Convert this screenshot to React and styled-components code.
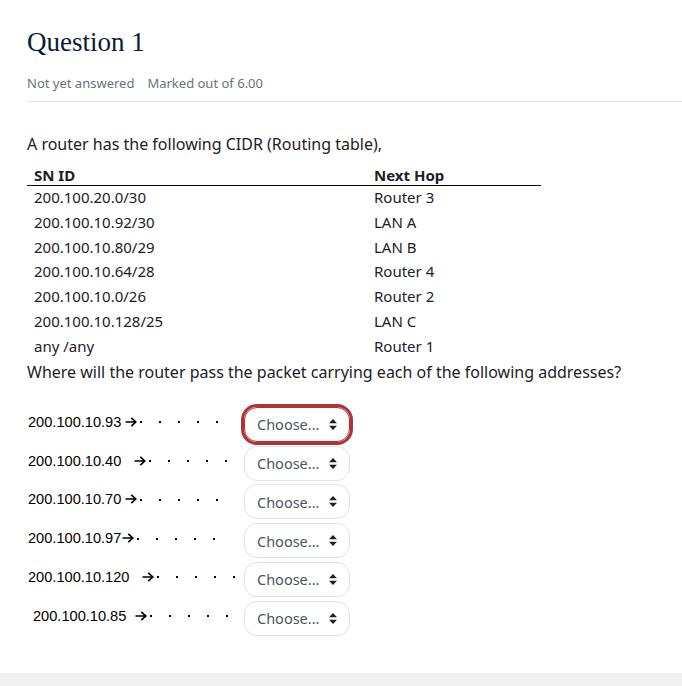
import React from "react";
import styled, { createGlobalStyle } from "styled-components";

const GlobalStyle = createGlobalStyle`
  body {
    margin: 0;
    background: #f0f0f0;
  }
`;

const routes = [
    ["200.100.20.0/30", "Router 3"],
    ["200.100.10.92/30", "LAN A"],
    ["200.100.10.80/29", "LAN B"],
    ["200.100.10.64/28", "Router 4"],
    ["200.100.10.0/26", "Router 2"],
    ["200.100.10.128/25", "LAN C"],
    ["any /any", "Router 1"],
];

const answers = [
    { label: "200.100.10.93", indent: 0, gap: 4, focused: true },
    { label: "200.100.10.40", indent: 0, gap: 13 },
    { label: "200.100.10.70", indent: 0, gap: 4 },
    { label: "200.100.10.97", indent: 0, gap: 1 },
    { label: "200.100.10.120", indent: 0, gap: 13 },
    { label: "200.100.10.85", indent: 5, gap: 9 },
];

export default function App() {
    return (
        <>
            <GlobalStyle />
            <Card>
                <Title>Question 1</Title>
                <Meta>
                    <span>Not yet answered</span>
                    <span>Marked out of 6.00</span>
                </Meta>
                <Divider />
                <Content>
                    <Paragraph>A router has the following CIDR (Routing table),</Paragraph>
                    <RouteTable>
                        <thead>
                            <tr>
                                <HeadCell>SN ID</HeadCell>
                                <HeadCell>Next Hop</HeadCell>
                            </tr>
                        </thead>
                        <tbody>
                            {routes.map(([sn, hop]) => (
                                <tr key={sn}>
                                    <Cell>{sn}</Cell>
                                    <Cell>{hop}</Cell>
                                </tr>
                            ))}
                        </tbody>
                    </RouteTable>
                    <Paragraph $top={5}>
                        Where will the router pass the packet carrying each of the following addresses?
                    </Paragraph>
                    <AnswerGrid>
                        {answers.map((a) => (
                            <React.Fragment key={a.label}>
                                <AnswerLabel $indent={a.indent}>
                                    {a.label}
                                    <Arrow $gap={a.gap} width="12" height="10" viewBox="0 0 12 10">
                                        <path
                                            d="M0.5 5 H10.8 M6.3 0.8 L10.8 5 L6.3 9.2"
                                            fill="none"
                                            stroke="#000"
                                            strokeWidth="1.7"
                                        />
                                    </Arrow>
                                    <Dots>
                                        {[0, 1, 2, 3, 4].map((i) => (
                                            <Dot key={i} />
                                        ))}
                                    </Dots>
                                </AnswerLabel>
                                <SelectBox $focused={a.focused}>
                                    <span>Choose...</span>
                                    <svg width="8" height="11" viewBox="0 0 8 11">
                                        <path d="M4 0 L8 4.3 H0 Z M4 11 L8 6.7 H0 Z" fill="#1d2125" />
                                    </svg>
                                </SelectBox>
                            </React.Fragment>
                        ))}
                    </AnswerGrid>
                </Content>
            </Card>
        </>
    );
}

const Card = styled.div`
  background: #fff;
  height: 673px;
  box-sizing: border-box;
  padding: 26px 0 0 27px;
  box-shadow: 0 3px 6px rgba(0, 0, 0, 0.1);
`;

const Title = styled.h3`
  margin: 0;
  font: 400 27px/32px "Liberation Serif", serif;
  color: #0c1a36;
`;

const Meta = styled.div`
  display: flex;
  gap: 13px;
  margin-top: 16px;
  font: 400 13px/18px "Noto Sans", sans-serif;
  color: #6a737b;
`;

const Divider = styled.div`
  margin-top: 9px;
  border-top: 1px solid #e3e5ea;
`;

const Content = styled.div`
  padding-top: 31px;
  color: #1d2125;
  font: 400 16px/22px "Noto Sans", sans-serif;
`;

const Paragraph = styled.p`
  margin: ${(p) => p.$top || 0}px 0 0;
`;

const RouteTable = styled.table`
  border-collapse: collapse;
  width: 514px;
  margin-top: 10px;
  color: #1d2125;
  font-size: 15px;

  tbody tr:first-child td {
    height: 21px;
  }
`;

const HeadCell = styled.th`
  text-align: left;
  font-weight: 700;
  padding: 0 7px;
  line-height: 20px;
  border-bottom: 1.5px solid #000;
  &:first-child {
    width: 326px;
  }
`;

const Cell = styled.td`
  padding: 0 7px;
  height: 24.8px;
  line-height: 20px;
  vertical-align: bottom;
`;

const AnswerGrid = styled.div`
  display: grid;
  grid-template-columns: 217px auto;
  justify-content: start;
  align-items: center;
  row-gap: 3.8px;
  margin-top: 24px;
`;

const AnswerLabel = styled.div`
  display: flex;
  align-items: center;
  font: 400 14.6px "Liberation Sans", Arial, sans-serif;
  color: #000;
  margin-top: -5px;
  padding-left: ${(p) => 1 + p.$indent}px;
`;

const Arrow = styled.svg`
  margin-left: ${(p) => p.$gap}px;
  flex: none;
`;

const Dots = styled.span`
  display: flex;
  gap: 17px;
  margin-left: 3px;
  padding-top: 1px;
`;

const Dot = styled.i`
  width: 2px;
  height: 2px;
  background: #000;
`;

const SelectBox = styled.div`
  display: flex;
  align-items: center;
  justify-content: space-between;
  box-sizing: border-box;
  width: 106px;
  height: 35px;
  padding: 0 12px 0 12px;
  border: 1px solid ${(p) => (p.$focused ? "#e11d1d" : "#dfe2e6")};
  border-radius: 13px;
  box-shadow: ${(p) => (p.$focused ? "0 0 0 3px #a3373a" : "none")};
  font: 400 14.5px "Noto Sans", sans-serif;
  color: #4a5563;
`;
